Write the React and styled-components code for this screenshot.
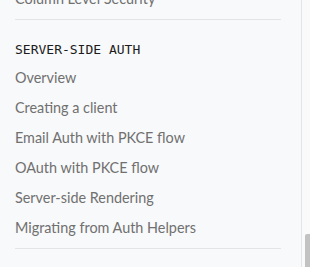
import React from "react";
import styled, { createGlobalStyle } from "styled-components";

const GlobalStyle = createGlobalStyle`
  html, body {
    margin: 0;
    padding: 0;
    background: #f8f9fa;
  }
`;

const Page = styled.div`
  display: flex;
  width: 310px;
  height: 267px;
  overflow: hidden;
`;

const Sidebar = styled.nav`
  width: 301px;
  height: 267px;
  overflow: hidden;
  border-right: 1px solid #e4e5e7;
  background: #f8f9fa;
`;

// list is scrolled a little, so the first entry sits partly above the top
const Inner = styled.div`
  margin-top: -16px;
  padding: 0 20px 0 15px;
`;

const Item = styled.a`
  display: block;
  height: 30px;
  line-height: 30px;
  font-family: "Lato", "Inter", sans-serif;
  font-size: 14.4px;
  color: #707070;
  white-space: nowrap;
`;

const Divider = styled.hr`
  border: 0;
  border-top: 1px solid #e3e4e6;
  margin: 5px 0 6px;
`;

const Heading = styled.h3`
  margin: 20px 0 3px;
  height: 20px;
  line-height: 20px;
  font-family: "DejaVu Sans Mono", monospace;
  font-size: 13px;
  font-weight: normal;
  color: #1c1c1c;
`;

const Track = styled.div`
  flex: 1;
  display: flex;
  flex-direction: column;
  align-items: flex-end;
  background: #fafafa;
`;

const Thumb = styled.div`
  margin-top: auto;
  width: 5px;
  height: 33px;
  background: #c2c2c2;
  border-top-left-radius: 2px;
`;

const items = [
  "Overview",
  "Creating a client",
  "Email Auth with PKCE flow",
  "OAuth with PKCE flow",
  "Server-side Rendering",
  "Migrating from Auth Helpers",
];

export default function App() {
  return (
    <Page>
      <GlobalStyle />
      <Sidebar>
        <Inner>
          <Item>Column Level Security</Item>
          <Divider />
          <Heading>SERVER-SIDE AUTH</Heading>
          {items.map((label) => (
            <Item key={label}>{label}</Item>
          ))}
          <Divider />
        </Inner>
      </Sidebar>
      <Track>
        <Thumb />
      </Track>
    </Page>
  );
}
